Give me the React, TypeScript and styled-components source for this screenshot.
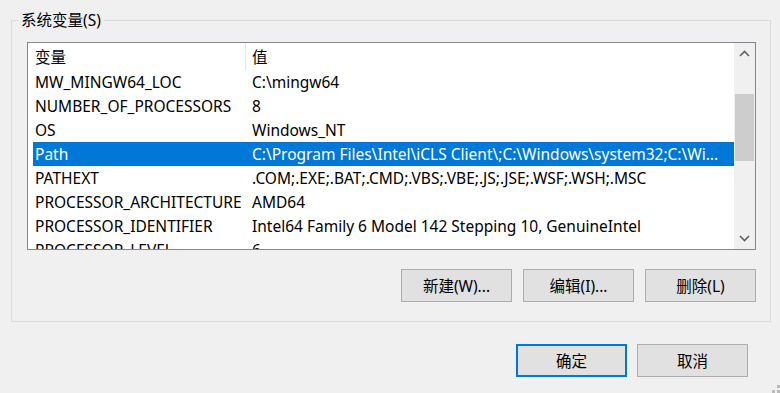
import React from "react";
import styled, { createGlobalStyle } from "styled-components";

const Global = createGlobalStyle`
  html, body { margin: 0; padding: 0; background: #f0f0f0; }
  body { font-family: "Noto Sans", "Noto Sans CJK SC", sans-serif; font-size: 15.5px; color: #000; }
`;

const Window = styled.div`
  width: 780px;
  height: 393px;
  box-sizing: border-box;
  padding: 20px 9px 0 11px;
  display: flex;
  flex-direction: column;
  position: relative;
  overflow: hidden;
`;

const GroupBox = styled.div`
  position: relative;
  border: 1px solid #dcdcdc;
  padding: 21px 14px 19px 15px;
  display: flex;
  flex-direction: column;
`;

const Legend = styled.div`
  position: absolute;
  top: -12px;
  left: 6px;
  padding: 0 3px;
  background: #f0f0f0;
  line-height: 22px;
  font-size: 15.5px;
`;

const ListBox = styled.div`
  border: 1px solid #828790;
  height: 208px;
  box-sizing: border-box;
  background: #fff;
  display: flex;
  overflow: hidden;
`;

const Table = styled.div`
  flex: 1;
  min-width: 0;
  display: flex;
  flex-direction: column;
  overflow: hidden;
`;

const HeaderRow = styled.div`
  display: grid;
  grid-template-columns: 217px 1fr;
  height: 27px;
  flex: none;
`;

const HeaderCell = styled.div<{ $divider?: boolean }>`
  display: flex;
  align-items: center;
  padding-left: ${(p) => (p.$divider ? "6px" : "7px")};
  border-left: ${(p) => (p.$divider ? "1px solid #e5e5e5" : "none")};
  font-size: 15.5px;
  white-space: nowrap;
`;

const Row = styled.div<{ $selected?: boolean }>`
  display: grid;
  grid-template-columns: ${(p) => (p.$selected ? "212px" : "217px")} 1fr;
  height: 24px;
  flex: none;
  background: ${(p) => (p.$selected ? "#0078d7" : "transparent")};
  color: ${(p) => (p.$selected ? "#fff" : "#000")};
  margin-left: ${(p) => (p.$selected ? "5px" : "0")};
`;

const Cell = styled.div<{ $shift?: boolean }>`
  display: flex;
  align-items: center;
  padding-left: ${(p) => (p.$shift ? "2px" : "7px")};
  white-space: nowrap;
  overflow: hidden;
  font-size: 15.5px;
`;

const ScrollBar = styled.div`
  width: 21px;
  flex: none;
  background: #f0f0f0;
  display: flex;
  flex-direction: column;
`;

const ArrowBtn = styled.div`
  height: 21px;
  flex: none;
  display: flex;
  align-items: center;
  justify-content: center;
`;

const Track = styled.div<{ $offset: number }>`
  flex: 1;
  padding-top: ${(p) => p.$offset}px;
  display: flex;
  flex-direction: column;
  align-items: center;
`;

const Thumb = styled.div<{ $h: number }>`
  width: 19px;
  height: ${(p) => p.$h}px;
  background: #cdcdcd;
`;

const ButtonRow = styled.div<{ $mt: number }>`
  display: flex;
  justify-content: flex-end;
  gap: 11px;
  margin-top: ${(p) => p.$mt}px;
`;

const Button = styled.button<{ $default?: boolean }>`
  width: 111px;
  height: 33px;
  box-sizing: border-box;
  background: #e1e1e1;
  border: ${(p) => (p.$default ? "2px solid #0078d7" : "1px solid #adadad")};
  font-family: "Noto Sans", "Noto Sans CJK SC", sans-serif;
  font-size: 15.5px;
  color: #000;
  padding: 0;
  display: flex;
  align-items: center;
  justify-content: center;
`;

const DialogButtons = styled(ButtonRow)`
  gap: 10px;
  padding-right: 23px;
`;

const Grip = styled.svg`
  position: absolute;
  right: 0;
  bottom: 0;
`;

const Chevron = ({ up }: { up?: boolean }) => (
  <svg width="11" height="7" viewBox="0 0 11 7">
    <path
      d={up ? "M1 6 L5.5 1.5 L10 6" : "M1 1 L5.5 5.5 L10 1"}
      fill="none"
      stroke="#606060"
      strokeWidth="1.6"
    />
  </svg>
);

const rows: [string, string][] = [
  ["MW_MINGW64_LOC", "C:\\mingw64"],
  ["NUMBER_OF_PROCESSORS", "8"],
  ["OS", "Windows_NT"],
  ["Path", "C:\\Program Files\\Intel\\iCLS Client\\;C:\\Windows\\system32;C:\\Wi..."],
  ["PATHEXT", ".COM;.EXE;.BAT;.CMD;.VBS;.VBE;.JS;.JSE;.WSF;.WSH;.MSC"],
  ["PROCESSOR_ARCHITECTURE", "AMD64"],
  ["PROCESSOR_IDENTIFIER", "Intel64 Family 6 Model 142 Stepping 10, GenuineIntel"],
  ["PROCESSOR_LEVEL", "6"],
];

export default function App() {
  return (
    <>
      <Global />
      <Window>
        <GroupBox>
          <Legend>系统变量(S)</Legend>
          <ListBox>
            <Table>
              <HeaderRow>
                <HeaderCell>变量</HeaderCell>
                <HeaderCell $divider>值</HeaderCell>
              </HeaderRow>
              {rows.map(([k, v]) => {
                const sel = k === "Path";
                return (
                  <Row key={k} $selected={sel}>
                    <Cell $shift={sel}>{k}</Cell>
                    <Cell>{v}</Cell>
                  </Row>
                );
              })}
            </Table>
            <ScrollBar>
              <ArrowBtn>
                <Chevron up />
              </ArrowBtn>
              <Track $offset={30}>
                <Thumb $h={67} />
              </Track>
              <ArrowBtn>
                <Chevron />
              </ArrowBtn>
            </ScrollBar>
          </ListBox>
          <ButtonRow $mt={19}>
            <Button>新建(W)...</Button>
            <Button>编辑(I)...</Button>
            <Button>删除(L)</Button>
          </ButtonRow>
        </GroupBox>
        <DialogButtons $mt={22}>
          <Button $default>确定</Button>
          <Button>取消</Button>
        </DialogButtons>
        <Grip width="8" height="8" viewBox="0 0 8 8">
          <rect x="5" y="0" width="3" height="3" fill="#bcbcbc" />
          <rect x="0" y="5" width="3" height="3" fill="#bcbcbc" />
          <rect x="5" y="5" width="3" height="3" fill="#bcbcbc" />
        </Grip>
      </Window>
    </>
  );
}
